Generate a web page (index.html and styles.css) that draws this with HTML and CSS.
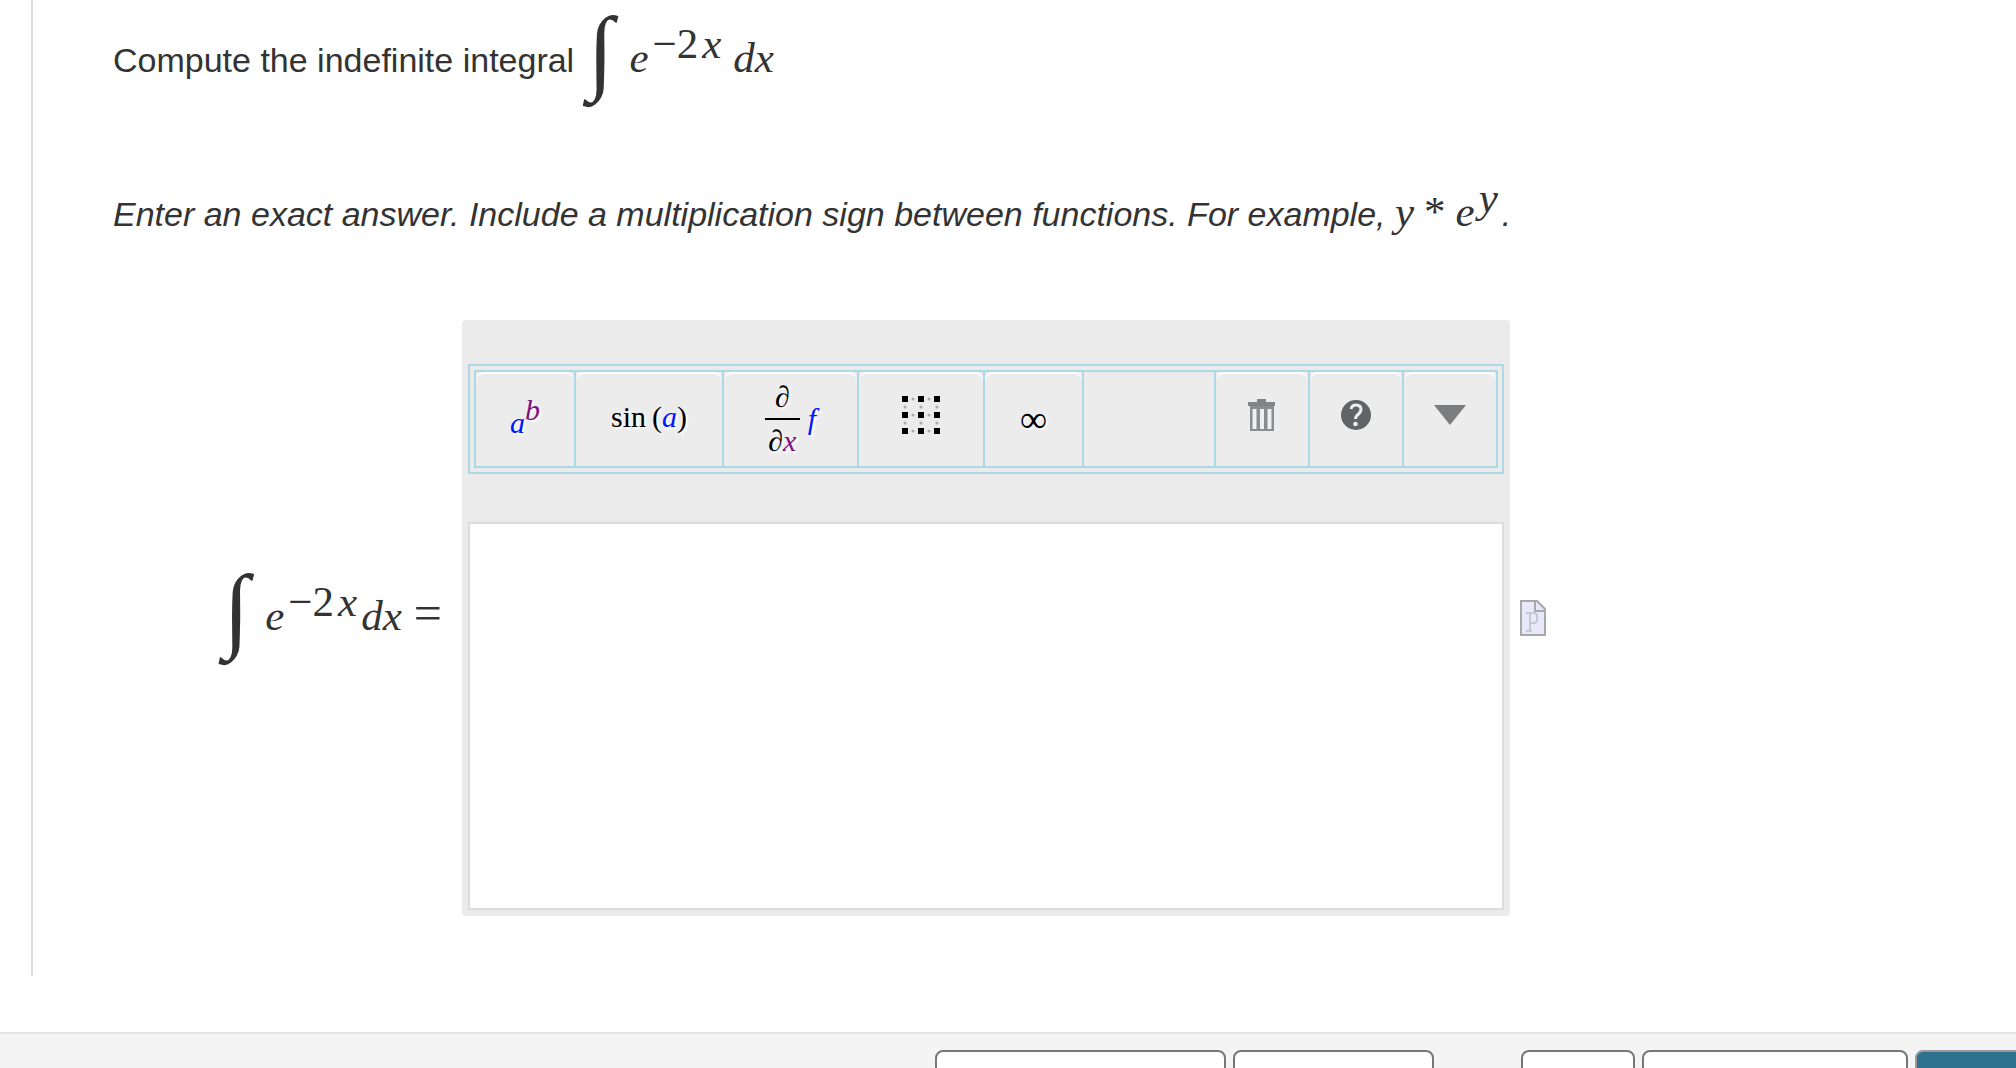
FILE: index.html
```html
<!DOCTYPE html>
<html lang="en">
<head>
    <meta charset="UTF-8">
    <meta name="viewport" content="width=device-width, initial-scale=1.0">
    <title>Indefinite Integral</title>
    <link rel="stylesheet" href="styles.css">
</head>
<body>
    <main class="question">
        <p class="prompt">Compute the indefinite integral <span class="math"><span class="integral">∫</span><i>e</i><span class="exp">−2<i class="var">x</i></span><i class="differential">dx</i></span></p>
        <p class="hint">Enter an exact answer. Include a multiplication sign between functions. For example, <span class="math"><i>y</i><span class="times">*</span><i>e</i><span class="exp"><i>y</i></span></span>.</p>

        <div class="answer">
            <label class="math" for="answerBox"><span class="integral">∫</span><i>e</i><span class="exp">−2<i class="var">x</i></span><i>dx</i><span class="equals">=</span></label>

            <div class="editor">
                <div class="toolbar">
                    <div class="tools">
                        <button type="button" class="tool exponent" aria-label="Exponent"><i class="blue">a</i><i class="purple power">b</i></button>
                        <button type="button" class="tool" aria-label="Functions"><span class="function">sin&thinsp;(<i class="blue">a</i>)</span></button>
                        <button type="button" class="tool" aria-label="Derivative">
                            <span class="fraction"><span class="top">∂</span><span>∂<i class="purple">x</i></span></span>
                            <i class="blue">f</i>
                        </button>
                        <button type="button" class="tool icon" aria-label="Matrix">
                            <svg width="40" height="40" viewBox="0 0 40 40">
                                <path d="M1 1h6v6h-6zM17 1h6v6h-6zM33 1h6v6h-6zM1 17h6v6h-6zM17 17h6v6h-6zM33 17h6v6h-6zM1 33h6v6h-6zM17 33h6v6h-6zM33 33h6v6h-6z"/>
                                <g fill="#aaa">
                                    <circle cx="12" cy="4" r="1.5"/><circle cx="28" cy="4" r="1.5"/>
                                    <circle cx="12" cy="20" r="1.5"/><circle cx="28" cy="20" r="1.5"/>
                                    <circle cx="12" cy="36" r="1.5"/><circle cx="28" cy="36" r="1.5"/>
                                    <circle cx="4" cy="12" r="1.5"/><circle cx="20" cy="12" r="1.5"/><circle cx="36" cy="12" r="1.5"/>
                                    <circle cx="4" cy="28" r="1.5"/><circle cx="20" cy="28" r="1.5"/><circle cx="36" cy="28" r="1.5"/>
                                </g>
                            </svg>
                        </button>
                        <button type="button" class="tool" aria-label="Symbols"><span class="infinity">∞</span></button>
                        <div class="spacer"></div>
                        <button type="button" class="tool icon" aria-label="Clear">
                            <svg width="28" height="32" viewBox="0 0 28 32">
                                <path d="M9 0H18V3H27V7H0V3H9Z" fill="#828385"/>
                                <path d="M2 7H26V32H2Z" fill="#8b8c8e"/>
                                <path d="M6.500 10V30M14 10V30M21.500 10V30" stroke="#f0f0f0" stroke-width="4"/>
                            </svg>
                        </button>
                        <button type="button" class="tool icon" aria-label="Help">
                            <svg width="32" height="32" viewBox="0 0 32 32">
                                <circle cx="16" cy="16" r="15" fill="#626366"/>
                                <path d="M11 10Q12 6 16 6Q21 6 21 10.500Q21 13 18 15.500Q15.500 17.500 15.500 20" fill="none" stroke="#eee" stroke-width="3"/>
                                <circle cx="15.500" cy="25" r="2.300" fill="#eee"/>
                            </svg>
                        </button>
                        <button type="button" class="tool icon" aria-label="More">
                            <svg width="32" height="20" viewBox="0 0 32 20"><path d="M0 0H32L16 20Z" fill="#7b7c7e"/></svg>
                        </button>
                    </div>
                </div>
                <textarea id="answerBox" class="answer-box"></textarea>
            </div>

            <button type="button" class="preview" aria-label="Preview">
                <svg width="26" height="36" viewBox="0 0 26 36">
                    <path d="M1 1H17L25 9V35H1Z" fill="#e8e8fa" stroke="#a8a8a8" stroke-width="2"/>
                    <path d="M15 1V11H25" fill="none" stroke="#a8a8a8" stroke-width="2"/>
                    <path d="M6 13H15L17 15V21L15 23H10M10 13V31M6 31H12" fill="none" stroke="#c8c8d2" stroke-width="2"/>
                </svg>
            </button>
        </div>
    </main>

    <footer class="actions">
        <button type="button" class="action hint-btn" aria-label="Hint"></button>
        <button type="button" class="action assist-btn" aria-label="Assistance"></button>
        <button type="button" class="action save-btn" aria-label="Save"></button>
        <button type="button" class="action check-btn" aria-label="Check"></button>
        <button type="button" class="action submit-btn" aria-label="Submit"></button>
    </footer>
</body>
</html>
```

FILE: styles.css
```css
* {
    box-sizing: border-box;
}

body {
    margin: 0;
    height: 100vh;
    overflow: hidden;
    display: flex;
    flex-direction: column;
    background: #fff;
    color: #333;
    font-family: "Liberation Sans", Arial, sans-serif;
    font-size: 34px;
}

/* Question */
.question {
    margin-left: 31px;
    border-left: 2px solid #dcdcdc;
    padding: 0 80px 60px;
    flex-shrink: 0;
}

.prompt,
.hint {
    margin: 0;
    line-height: 116px;
}

.hint {
    margin-top: 36px;
    margin-bottom: 48px;
    font-style: italic;
}

/* Math */
.math {
    font-family: "Liberation Serif", "Times New Roman", serif;
    font-style: normal;
    font-size: 43px;
    white-space: nowrap;
}

.integral {
    margin-left: 4px;
    margin-right: 16px;
    font-style: italic;
    font-size: 94px;
    line-height: 0;
    vertical-align: -10px;
}

.exp {
    margin: 0 4px;
    line-height: 0;
    vertical-align: 14px;
}

.var {
    margin-left: 4px;
}

.differential {
    margin-left: 8px;
}

.times {
    margin: 0 10px;
}

.equals {
    margin-left: 12px;
    font-size: 50px;
    line-height: 0;
}

/* Answer row */
.answer {
    display: flex;
    align-items: center;
}

.answer .math {
    width: 349px;
    padding-right: 20px;
    padding-bottom: 6px;
    text-align: right;
    flex-shrink: 0;
}

.editor {
    flex: 0 1 1048px;
    padding: 44px 6px 6px;
    background: #ebebeb;
    border-radius: 4px;
}

.toolbar {
    padding: 4px;
    border: 2px solid #add8e6;
}

.tools {
    display: grid;
    grid-template-columns: 98fr 146fr 133fr 124fr 97fr 130fr 92fr 92fr 92fr;
    gap: 2px;
    height: 98px;
    padding: 2px;
    background: #add8e6;
}

.tool,
.spacer {
    background: #ececec;
}

.tool {
    display: flex;
    align-items: center;
    justify-content: center;
    margin: 0;
    padding: 0;
    border: 0;
    color: #000;
    font-family: "Liberation Serif", "Times New Roman", serif;
    font-size: 30px;
    text-shadow: 2px 2px 2px #fff;
    cursor: pointer;
    position: relative;
}

.exponent {
    padding-top: 8px;
}

.icon {
    padding-bottom: 8px;
}

/* White highlight along the rounded top edge */
.tool::before {
    content: "";
    position: absolute;
    inset: 0;
    border-top: 2px solid #fff;
    border-radius: 8px 8px 0 0;
}

.blue {
    color: #0019ff;
}

.purple {
    color: #7b1482;
}

.power {
    padding-bottom: 26px;
}

.function {
    padding-bottom: 4px;
}

.fraction {
    display: flex;
    flex-direction: column;
    align-items: center;
    margin-right: 8px;
    line-height: 42px;
}

.fraction .top {
    align-self: stretch;
    padding: 0 10px;
    border-bottom: 2px solid #000;
}

.infinity {
    font-size: 38px;
}

.answer-box {
    display: block;
    width: 100%;
    height: 388px;
    margin-top: 48px;
    padding: 12px;
    border: 2px solid #dcdcdc;
    border-radius: 0;
    background: #fff;
    font: inherit;
    resize: none;
    outline: none;
}

.preview {
    display: flex;
    margin-left: 10px;
    padding: 0;
    border: 0;
    background: none;
    cursor: pointer;
}

/* Bottom bar */
.actions {
    display: flex;
    justify-content: flex-end;
    gap: 7px;
    margin-top: 56px;
    padding-top: 16px;
    flex-grow: 1;
    min-height: 0;
    overflow: hidden;
    border-top: 2px solid #e3e3e3;
    background: #f4f4f4;
}

.action {
    height: 64px;
    flex-shrink: 0;
    border: 2px solid #777;
    border-radius: 8px;
    background: #fff;
    cursor: pointer;
}

.hint-btn {
    width: 291px;
}

.assist-btn {
    width: 201px;
    margin-right: 80px;
}

.save-btn {
    width: 114px;
}

.check-btn {
    width: 266px;
}

.submit-btn {
    width: 160px;
    margin-right: -59px;
    border-color: #999;
    background: #2e728f;
}
```
